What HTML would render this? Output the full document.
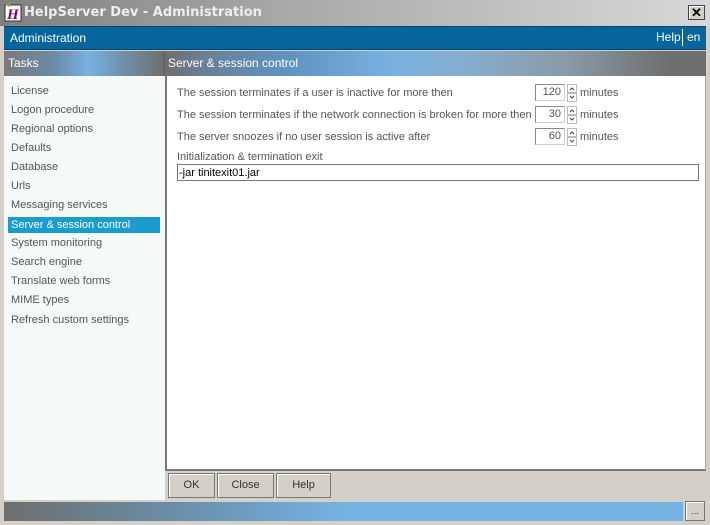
<!DOCTYPE html>
<html><head><style>
*{margin:0;padding:0;box-sizing:border-box}
body{width:710px;height:525px;background:#d4d0c8;font-family:"Liberation Sans",sans-serif;font-size:11px;position:relative;overflow:hidden;color:#555}
.a{position:absolute}
#title{left:0;top:0;width:710px;height:26px;background:linear-gradient(90deg,#808080,#a8a8a8 40%,#c8c8c8 80%,#d8d8d8);}
#title span{position:absolute;left:24px;top:5px;color:#eee;font-weight:bold;font-size:13px;font-family:"DejaVu Sans",sans-serif}
#hdr{left:4px;top:26px;width:702px;height:24px;background:#08659c;border-top:1px solid #05466e;border-bottom:1px solid #05466e;color:#fff;font-size:12px}
#tasks{left:4px;top:51px;width:702px;height:25px;background:linear-gradient(90deg,#7a7a7a 0%,#6a8aa8 7%,#79b1e0 12%,#6f8fab 17%,#6e6e6e 23%,#6a7f95 28%,#5f92c0 40%,#78b1e0 55%,#86aed0 65%,#8a9aa8 80%,#6e6e6e 95%);color:#fff;font-size:12px}
#left{left:4px;top:76px;width:161px;height:424px;background:#f5faf8}
#left div{position:absolute;left:7px;font-size:11px;color:#555}
#right{left:165px;top:76px;width:541px;height:395px;background:#fff;border-left:2px solid #777;border-bottom:2px solid #777;border-right:1px solid #aaa}
.num{position:absolute;width:30px;height:17px;border:1px solid #888;border-right-color:#ccc;border-bottom-color:#ccc;text-align:right;padding-right:3px;line-height:15px;color:#555}
.sp{position:absolute;width:10px;height:18px}
.btn{position:absolute;top:473px;height:25px;border:1px solid #777;background:#d4d0c8;text-align:center;line-height:23px;color:#333;box-shadow:inset 1px 1px #fff}
#status{left:4px;top:502px;width:679px;height:19px;background:linear-gradient(90deg,#6e6e6e,#6a8aa0 22%,#6fa0c8 38%,#74b2e4 50%,#74b2e4)}
</style></head><body>
<div class="a" id="title"><svg class="a" style="left:4px;top:3px" width="18" height="19"><rect x="1" y="2" width="16" height="16" fill="#fff" stroke="#333"/><text x="3" y="16" font-family="Liberation Serif" font-weight="bold" font-style="italic" font-size="15" fill="#800070">H</text><path d="M2 1l3 3M5 0l1 4" stroke="#cc0" /></svg><span>HelpServer Dev - Administration</span>
<div class="a" style="left:688px;top:5px;width:17px;height:15px;background:#d4d0c8;border:1px solid #444;box-shadow:inset 1px 1px #fff;text-align:center;font-weight:bold;font-size:13px;line-height:13px;color:#000">✕</div></div>
<div class="a" id="hdr"><span class="a" style="left:6px;top:4px">Administration</span><span class="a" style="left:652px;top:3px">Help</span><span class="a" style="left:678px;top:2px;width:1px;height:17px;background:#fff"></span><span class="a" style="left:683px;top:3px">en</span></div>
<div class="a" id="tasks"><span class="a" style="left:4px;top:5px">Tasks</span><span class="a" style="left:164px;top:5px">Server &amp; session control</span></div>
<div class="a" style="left:163px;top:51px;width:2px;height:25px;background:#555;opacity:.4"></div>
<div class="a" id="left">
<div style="top:9px">License</div><div style="top:28px">Logon procedure</div><div style="top:47px">Regional options</div><div style="top:66px">Defaults</div><div style="top:85px">Database</div><div style="top:104px">Urls</div><div style="top:123px">Messaging services</div>
<div style="top:141px;left:4px;width:152px;height:16px;background:#1a9cce;color:#fff;padding-left:3px;line-height:16px">Server &amp; session control</div>
<div style="top:161px">System monitoring</div><div style="top:180px">Search engine</div><div style="top:199px">Translate web forms</div><div style="top:218px">MIME types</div><div style="top:238px">Refresh custom settings</div>
</div>
<div class="a" id="right">
<div class="a" style="left:10px;top:11px">The session terminates if a user is inactive for more then</div>
<div class="a" style="left:10px;top:33px">The session terminates if the network connection is broken for more then</div>
<div class="a" style="left:10px;top:55px">The server snoozes if no user session is active after</div>
<div class="num" style="left:368px;top:8px">120</div><svg class="sp" style="left:400px;top:8px"><rect x=".5" y=".5" width="9" height="8" fill="none" stroke="#bbb"/><rect x=".5" y="9.5" width="9" height="8" fill="none" stroke="#bbb"/><path d="M3 6l2-2 2 2M3 12l2 2 2-2" fill="none" stroke="#444"/></svg><div class="a" style="left:413px;top:11px">minutes</div>
<div class="num" style="left:368px;top:30px">30</div><svg class="sp" style="left:400px;top:30px"><rect x=".5" y=".5" width="9" height="8" fill="none" stroke="#bbb"/><rect x=".5" y="9.5" width="9" height="8" fill="none" stroke="#bbb"/><path d="M3 6l2-2 2 2M3 12l2 2 2-2" fill="none" stroke="#444"/></svg><div class="a" style="left:413px;top:33px">minutes</div>
<div class="num" style="left:368px;top:52px">60</div><svg class="sp" style="left:400px;top:52px"><rect x=".5" y=".5" width="9" height="8" fill="none" stroke="#bbb"/><rect x=".5" y="9.5" width="9" height="8" fill="none" stroke="#bbb"/><path d="M3 6l2-2 2 2M3 12l2 2 2-2" fill="none" stroke="#444"/></svg><div class="a" style="left:413px;top:55px">minutes</div>
<div class="a" style="left:10px;top:75px">Initialization &amp; termination exit</div>
<div class="a" style="left:10px;top:88px;width:522px;height:17px;border:1px solid #777;color:#000;padding-left:1px;line-height:17px">-jar tinitexit01.jar</div>
</div>
<div class="btn" style="left:168px;width:47px">OK</div>
<div class="btn" style="left:217px;width:57px">Close</div>
<div class="btn" style="left:276px;width:55px">Help</div>
<div class="a" id="status"></div>
<div class="a" style="left:685px;top:501px;width:20px;height:20px;border:1px solid #777;background:#d4d0c8;font-size:9px;text-align:center;line-height:18px;color:#333;box-shadow:inset 1px 1px #fff">...</div>
</body></html>
